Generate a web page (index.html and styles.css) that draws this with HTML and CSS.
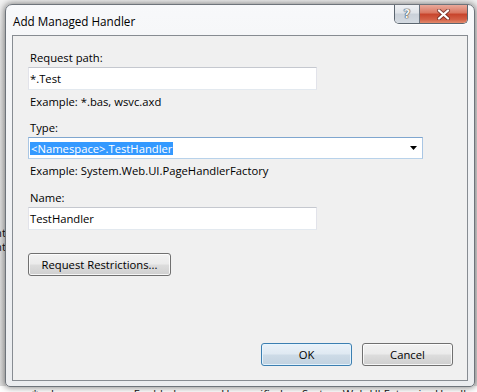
FILE: index.html
```html
<!DOCTYPE html>
<html>
<head>
<meta charset="utf-8">
<title>Add Managed Handler</title>
<link rel="stylesheet" href="styles.css">
</head>
<body>
<div class="desk">
  <div class="under">
    <div class="frag-left first">nt</div>
    <div class="frag-left">nt</div>
    <div class="under-row">
      <span class="c1">*.xd</span>
      <span class="c2">Enabled</span>
      <span class="c3">Unspecified</span>
      <span class="c4">System.Web.UI.ExtensionHandler</span>
    </div>
  </div>

  <div class="dialog">
    <div class="titlebar">
      <div class="title">Add Managed Handler</div>
      <div class="caption-btns">
        <div class="cap help">?</div>
        <div class="cap close">
          <svg width="15" height="11" viewBox="0 0 15 11">
            <path d="M3 1.5 L12 9.5 M12 1.5 L3 9.5" stroke="#5a2220" stroke-width="4" stroke-linecap="round" fill="none" opacity="0.7"/>
            <path d="M3 1.5 L12 9.5 M12 1.5 L3 9.5" stroke="#ffffff" stroke-width="2.3" stroke-linecap="round" fill="none"/>
          </svg>
        </div>
      </div>
    </div>

    <div class="client">
      <div class="label">Request path:</div>
      <div class="textbox">*.Test</div>
      <div class="example">Example: *.bas, wsvc.axd</div>

      <div class="label type-label">Type:</div>
      <div class="combo">
        <span class="sel">&lt;Namespace&gt;.TestHandler</span>
        <svg class="arrow" width="7" height="4" viewBox="0 0 7 4"><path d="M0 0 H7 L3.5 4 Z" fill="#000"/></svg>
      </div>
      <div class="example">Example: System.Web.UI.PageHandlerFactory</div>

      <div class="label name-label">Name:</div>
      <div class="textbox">TestHandler</div>

      <button class="btn restrict">Request Restrictions...</button>

      <div class="footer">
        <button class="btn default">OK</button>
        <button class="btn">Cancel</button>
      </div>
    </div>
  </div>
</div>
</body>
</html>
```
FILE: styles.css
```css
* { box-sizing: border-box; }
html, body { margin: 0; padding: 0; }
body {
  width: 477px;
  height: 392px;
  overflow: hidden;
  font-family: "Open Sans", "Noto Sans", sans-serif;
  font-size: 11.25px;
  color: #000;
  background: #e2e2e2;
}

.desk {
  position: relative;
  width: 477px;
  height: 392px;
  overflow: hidden;
  background: linear-gradient(to bottom, #f2f2f2 0, #e4e4e4 40px, #dedede 100%);
}

/* underlying window content, mostly hidden */
.under {
  display: flex;
  flex-direction: column;
  line-height: 14px;
  color: #111;
}
.frag-left { margin-left: -5px; }
.frag-left.first { margin-top: 226px; }
.under-row {
  display: flex;
  margin-top: 132px;
  background: #fff;
  height: 20px;
  line-height: 15px;
}
.under-row span { white-space: nowrap; }
.c1 { margin-left: 32px; width: 121px; }
.c2 { width: 104px; }
.c3 { width: 96px; }

/* dialog window */
.dialog {
  position: absolute;
  left: 5px;
  top: 4px;
  width: 470px;
  height: 383px;
  border: 1px solid #6e747b;
  border-radius: 7px 7px 5px 5px;
  background: linear-gradient(to bottom, rgba(248,249,251,0.94) 0, rgba(240,242,245,0.9) 60%, rgba(236,238,241,0.92) 100%);
  box-shadow: 0 0 6px 1px rgba(0,0,0,0.45);
  display: flex;
  flex-direction: column;
  padding: 0 6px 5px 6px;
}

.titlebar {
  height: 30px;
  display: flex;
  flex-shrink: 0;
}
.title {
  align-self: center;
  padding-left: 1px;
  padding-top: 1px;
  font-size: 11.7px;
  line-height: 16px;
  color: #000;
}
.caption-btns {
  margin-left: auto;
  display: flex;
  height: 19px;
  border: 1px solid #5c6670;
  border-top: none;
  border-radius: 0 0 5px 5px;
  overflow: hidden;
  box-shadow: 0 1px 0 rgba(255,255,255,0.8);
}
.cap {
  height: 100%;
  display: flex;
  align-items: center;
  justify-content: center;
}
.help {
  width: 25px;
  background: linear-gradient(to bottom, #eef0f3 0, #dfe3e8 45%, #c9d0d8 50%, #d5dbe2 100%);
  border-right: 1px solid #6b747e;
  font-family: "DejaVu Sans", sans-serif;
  font-weight: bold;
  font-size: 12px;
  color: #f2f2f2;
  text-shadow: 0 0 1px #3a3f45, 0 0 1px #3a3f45, 0 0 1px #3a3f45;
  line-height: 1;
}
.close {
  width: 47px;
  background: linear-gradient(to bottom, #e9a99b 0, #d9755f 45%, #c7432b 50%, #d35f45 80%, #e38a6c 100%);
}

/* client area */
.client {
  flex: 1;
  border: 1px solid #878c92;
  background: #f0f0f0;
  padding: 14px 14px 14px 15px;
  display: flex;
  flex-direction: column;
  align-items: flex-start;
}

.label {
  line-height: 15px;
  padding-left: 2px;
  margin-bottom: 2px;
}
.type-label { margin-top: 11px; }
.name-label { margin-top: 12px; }

.textbox {
  width: 289px;
  height: 23px;
  background: #fff;
  border: 1px solid;
  border-color: #c5c8cf #e2e3ea #e3e9ef #e2e3ea;
  padding-left: 1px;
  line-height: 21px;
  white-space: nowrap;
}

.example {
  margin-top: 4px;
  line-height: 15px;
  padding-left: 2px;
}

.combo {
  width: 395px;
  height: 22px;
  background: #fff;
  border: 1px solid;
  border-color: #7fa6cf #a9c6e4 #b8d2ea #a9c6e4;
  display: flex;
  align-items: center;
  padding-left: 1px;
}
.sel {
  background: #3399ff;
  color: #fff;
  line-height: 13px;
  padding: 0 1px;
  white-space: nowrap;
}
.arrow {
  margin-left: auto;
  margin-right: 5px;
}

.btn {
  font-family: inherit;
  font-size: inherit;
  color: #000;
  height: 23px;
  border: 1px solid #707070;
  border-radius: 3px;
  background: linear-gradient(to bottom, #f2f2f2 0, #ebebeb 48%, #dddddd 52%, #cfcfcf 100%);
  box-shadow: inset 0 0 0 1px rgba(255,255,255,0.8);
  padding: 0;
  line-height: 19px;
}
.restrict {
  margin-top: 23px;
  width: 143px;
}
.footer {
  margin-top: auto;
  align-self: stretch;
  display: flex;
  justify-content: flex-end;
  gap: 10px;
}
.footer .btn { width: 91px; }
.btn.default {
  border-color: #3c7fb1;
  background: linear-gradient(to bottom, #eaf2f9 0, #dfe9f2 48%, #cddbe7 52%, #c2d2e0 100%);
  box-shadow: inset 0 0 0 1px rgba(230,245,255,0.9);
}
```
